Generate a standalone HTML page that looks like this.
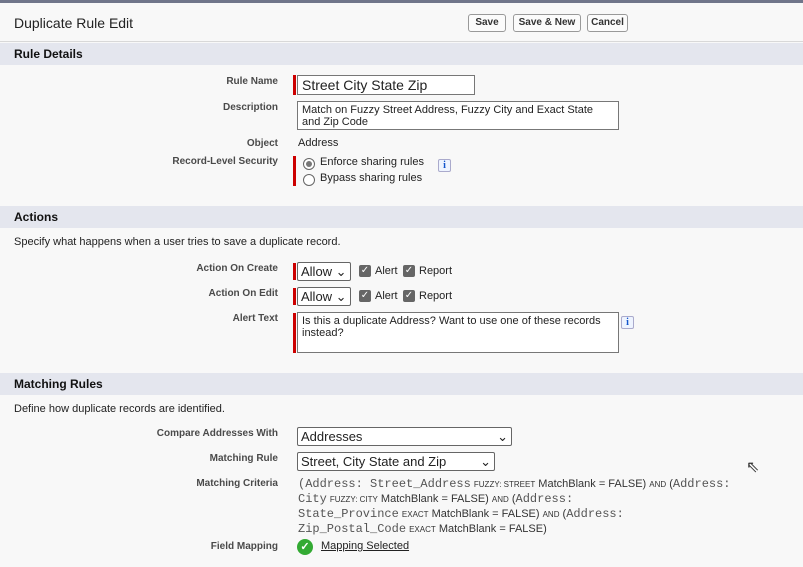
<!DOCTYPE html>
<html><head><style>
*{box-sizing:border-box;margin:0;padding:0}
body{width:803px;height:567px;background:#f8f8f8;font-family:"Liberation Sans",Arial,sans-serif;font-size:11px;color:#222;position:relative;overflow:hidden}
.a{position:absolute}
.top{left:0;top:0;width:803px;height:3px;background:#70758a}
.hl{left:0;top:41px;width:803px;height:1px;background:#d8d8d8}
.sec{left:0;width:803px;height:22px;background:#e4e6ee;font-weight:bold;font-size:12px;padding:4px 0 0 14px;color:#111}
.lbl{right:525px;font-weight:bold;font-size:10px;color:#4a4a4a;text-align:right;white-space:nowrap}
.btn{top:14px;height:18px;border:1px solid #999;border-radius:3px;background:#fbfbfb;font-size:10px;font-weight:bold;line-height:16px;text-align:center;color:#333}
.req{width:3px;background:#c00}
.box{background:#fff;border:1px solid #777;font-size:11px;padding:2px 4px;line-height:12px}
.sel{background:#fff;border:1px solid #666;border-radius:2px;font-size:13px;padding:1px 3px;height:19px}
.chk{width:12px;height:12px;background:#666;border-radius:2px;color:#fff;font-size:10px;line-height:12px;text-align:center}
.info{width:13px;height:13px;border:1px solid #aac;border-radius:2px;background:#eef4ff;color:#15c;font-size:10px;font-weight:bold;text-align:center;line-height:11px;font-family:"Liberation Serif",serif}
.mono{font-family:"Liberation Mono",monospace;color:#555;font-size:12px}
.sm{font-size:8px}
</style></head><body>
<div class="a top"></div>
<div class="a" style="left:14px;top:15px;font-size:14px;color:#222">Duplicate Rule Edit</div>
<div class="a btn" style="left:468px;width:38px">Save</div>
<div class="a btn" style="left:513px;width:68px">Save &amp; New</div>
<div class="a btn" style="left:587px;width:41px">Cancel</div>
<div class="a hl"></div>

<div class="a sec" style="top:43px">Rule Details</div>
<div class="a lbl" style="top:76px">Rule Name</div>
<div class="a req" style="left:293px;top:75px;height:20px"></div>
<div class="a box" style="left:297px;top:75px;width:178px;height:20px;font-size:14px;line-height:15px">Street City State Zip</div>
<div class="a lbl" style="top:102px">Description</div>
<div class="a box" style="left:297px;top:101px;width:322px;height:29px">Match on Fuzzy Street Address, Fuzzy City and Exact State and Zip Code</div>
<div class="a lbl" style="top:138px">Object</div>
<div class="a" style="left:298px;top:137px">Address</div>
<div class="a lbl" style="top:156px">Record-Level Security</div>
<div class="a req" style="left:293px;top:156px;height:30px"></div>
<div class="a" style="left:303px;top:158px;width:12px;height:12px;border:1px solid #666;border-radius:50%;background:#fff"><div style="margin:2px;width:6px;height:6px;border-radius:50%;background:#777"></div></div>
<div class="a" style="left:320px;top:156px">Enforce sharing rules</div>
<div class="a info" style="left:438px;top:159px">i</div>
<div class="a" style="left:303px;top:174px;width:12px;height:12px;border:1px solid #666;border-radius:50%;background:#fff"></div>
<div class="a" style="left:320px;top:172px">Bypass sharing rules</div>

<div class="a sec" style="top:206px">Actions</div>
<div class="a" style="left:14px;top:236px">Specify what happens when a user tries to save a duplicate record.</div>
<div class="a lbl" style="top:263px">Action On Create</div>
<div class="a req" style="left:293px;top:263px;height:17px"></div>
<div class="a sel" style="left:297px;top:262px;width:54px">Allow ⌄</div>
<div class="a chk" style="left:359px;top:265px">✓</div><div class="a" style="left:375px;top:265px">Alert</div>
<div class="a chk" style="left:403px;top:265px">✓</div><div class="a" style="left:419px;top:265px">Report</div>
<div class="a lbl" style="top:288px">Action On Edit</div>
<div class="a req" style="left:293px;top:288px;height:17px"></div>
<div class="a sel" style="left:297px;top:287px;width:54px">Allow ⌄</div>
<div class="a chk" style="left:359px;top:290px">✓</div><div class="a" style="left:375px;top:290px">Alert</div>
<div class="a chk" style="left:403px;top:290px">✓</div><div class="a" style="left:419px;top:290px">Report</div>
<div class="a lbl" style="top:313px">Alert Text</div>
<div class="a req" style="left:293px;top:313px;height:40px"></div>
<div class="a box" style="left:297px;top:312px;width:322px;height:41px">Is this a duplicate Address? Want to use one of these records instead?</div>
<div class="a info" style="left:621px;top:316px">i</div>

<div class="a sec" style="top:373px">Matching Rules</div>
<div class="a" style="left:14px;top:403px">Define how duplicate records are identified.</div>
<div class="a lbl" style="top:428px">Compare Addresses With</div>
<div class="a sel" style="left:297px;top:427px;width:215px">Addresses<span style="float:right">⌄</span></div>
<div class="a lbl" style="top:453px">Matching Rule</div>
<div class="a sel" style="left:297px;top:452px;width:198px">Street, City State and Zip<span style="float:right">⌄</span></div>
<div class="a lbl" style="top:478px">Matching Criteria</div>
<div class="a" style="left:298px;top:477px;line-height:14px;width:480px;color:#333;white-space:nowrap"><span class="mono">(Address: Street_Address</span> <span class="sm">FUZZY: STREET</span> MatchBlank = FALSE) <span class="sm">AND</span> (<span class="mono">Address:</span><br><span class="mono">City</span> <span class="sm">FUZZY: CITY</span> MatchBlank = FALSE) <span class="sm">AND</span> (<span class="mono">Address:</span><br><span class="mono">State_Province</span> <span class="sm">EXACT</span> MatchBlank = FALSE) <span class="sm">AND</span> (<span class="mono">Address:</span><br><span class="mono">Zip_Postal_Code</span> <span class="sm">EXACT</span> MatchBlank = FALSE)</div>
<div class="a lbl" style="top:541px">Field Mapping</div>
<div class="a" style="left:297px;top:539px;width:16px;height:16px;border-radius:50%;background:#3a3;color:#fff;font-size:11px;text-align:center;line-height:16px;font-weight:bold">✓</div>
<div class="a" style="left:321px;top:540px;text-decoration:underline">Mapping Selected</div>
<div class="a" style="left:746px;top:457px;font-size:16px;color:#333">⇖</div>
</body></html>
